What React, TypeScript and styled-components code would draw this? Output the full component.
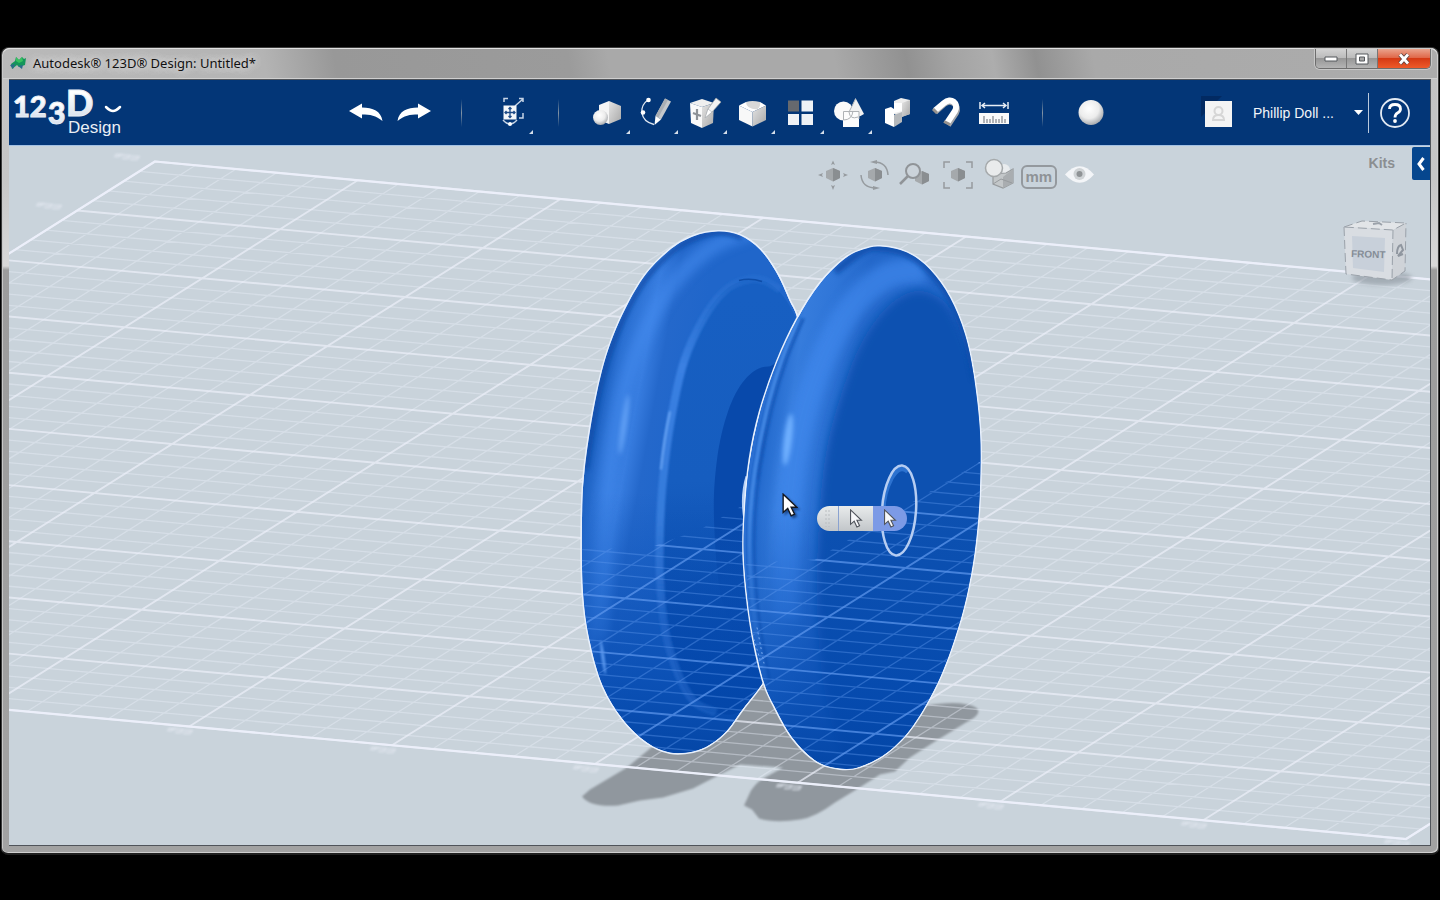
import React from "react";
import styled, { createGlobalStyle } from "styled-components";

type Pt = [number, number];

const GlobalStyle = createGlobalStyle`
  * { box-sizing: border-box; }
  body { margin: 0; background: #000; font-family: "Liberation Sans", Arial, sans-serif; }
  button { border: 0; padding: 0; margin: 0; background: none; font: inherit; color: inherit; cursor: pointer; }
`;

const Desktop = styled.div`
  display: flex;
  flex-direction: column;
  min-height: 100vh;
  padding: 47px 1px 45px;
  background: #000;
`;

const AppWindow = styled.main`
  flex: 1;
  display: flex;
  flex-direction: column;
  padding: 0 7px 7px;
  border: 1px solid #3c3c3c;
  border-bottom: 2px solid #1e1e1e;
  border-radius: 8px 8px 7px 7px;
  background: linear-gradient(#c2c2c2 0, #c6c6c6 130px, #d8d8d8 218px, #9c9c9c 222px, #a2a2a2 100%);
  box-shadow: inset 0 1px 0 #e4e4e4, inset 1px 0 0 #c9c9c9, inset -1px -1px 0 #cfcfcf;
`;

const TitleBar = styled.header`
  display: flex;
  align-items: flex-start;
  height: 31px;
  margin: 0 -6px;
  padding: 0 6px;
  border-radius: 7px 7px 0 0;
  border-top: 1px solid #e0e0e0;
  background: linear-gradient(80deg, #b9b9b9 0, #b4b4b4 260px, #989898 330px, #9b9b9b 560px, #a9a9a9 600px, #a9a9a9 58%, #919191 63%, #a3a3a3 66%, #adadad 69%, #919191 72%, #a9a9a9 76%, #acacac 100%);
  box-shadow: inset 0 -1px 0 #cfcfcf;
`;

const WindowTitle = styled.h1`
  display: flex;
  align-items: center;
  gap: 6px;
  flex: 1;
  margin: 0;
  padding-left: 1px;
  height: 28px;
  font: 400 13px/18px "Noto Sans", "Open Sans", sans-serif;
  color: #111;
  text-shadow: 0 0 8px #e6e6e6, 0 0 8px #e6e6e6;
`;

const WindowControls = styled.div`
  display: flex;
  height: 20px;
  border: 1px solid #6d6d6d;
  border-top: 0;
  border-radius: 0 0 5px 5px;
  overflow: hidden;
  box-shadow: 0 0 0 1px #c8c8c8;
`;

const WindowButton = styled.button<{ $close?: boolean }>`
  display: grid;
  place-items: center;
  width: ${(p) => (p.$close ? 52 : 31)}px;
  border-right: ${(p) => (p.$close ? "0" : "1px solid #777")};
  background: ${(p) =>
    p.$close
      ? "linear-gradient(#eaa38c 0, #e0694a 45%, #d53a14 50%, #ee5a2a 100%)"
      : "linear-gradient(#d2d2d2 0, #bcbcbc 45%, #979797 50%, #b4b4b4 100%)"};
`;

const Client = styled.div`
  flex: 1;
  display: flex;
  flex-direction: column;
  border: 1px solid #50545a;
  border-width: 1px 1px 1px 0;
  min-height: 0;
`;

const Toolbar = styled.nav`
  display: grid;
  grid-template-columns: 1fr auto 1fr;
  align-items: center;
  height: 66px;
  background: #033677;
  border-bottom: 1px solid #a3c1e4;
`;

const BrandButton = styled.button`
  display: block;
  justify-self: start;
  width: 130px;
  height: 64px;
`;

const Tools = styled.div`
  display: flex;
  align-items: center;
  height: 65px;
  padding-left: 18px;
`;

const ToolGroup = styled.div<{ $width: number; $count: number }>`
  display: grid;
  grid-template-columns: repeat(${(p) => p.$count}, 1fr);
  width: ${(p) => p.$width}px;
`;

const ToolButton = styled.button<{ $menu?: boolean }>`
  position: relative;
  display: grid;
  place-items: center;
  height: 64px;
  &::after {
    content: "";
    display: ${(p) => (p.$menu ? "block" : "none")};
    position: absolute;
    right: 1px;
    bottom: 11px;
    border-left: 4px solid transparent;
    border-bottom: 4px solid #d5deea;
  }
`;

const Divider = styled.span`
  width: 1px;
  height: 28px;
  background: linear-gradient(transparent, #8394a5, transparent);
`;

const Account = styled.div`
  display: flex;
  align-items: center;
  justify-self: end;
  height: 64px;
  padding-right: 19px;
`;

const AccountButton = styled.button`
  display: flex;
  align-items: center;
  gap: 20px;
  height: 40px;
  padding-right: 5px;
  border-right: 1px solid #b9c9dd;
  font-size: 14px;
  line-height: 20px;
  color: #f2f5fa;
`;

const UserName = styled.span`
  width: 81px;
  text-align: left;
  white-space: nowrap;
`;

const HelpButton = styled.button`
  display: grid;
  place-items: center;
  width: 32px;
  height: 32px;
  margin-left: 10px;
`;

const Viewport = styled.section`
  position: relative;
  flex: 1;
  min-height: 560px;
  background: #c9d3db;
  overflow: hidden;
`;

const SceneSvg = styled.svg`
  position: absolute;
  inset: 0;
  width: 100%;
  height: 100%;
`;

const Overlay = styled.div`
  position: relative;
  display: flex;
  justify-content: flex-end;
  align-items: flex-start;
`;

const ViewControls = styled.div`
  display: grid;
  grid-template-columns: repeat(7, 1fr);
  width: 288px;
  margin-top: 9px;
  margin-right: 268px;
`;

const ViewButton = styled.button`
  display: grid;
  place-items: center;
  height: 40px;
`;

const UnitButton = styled.button`
  justify-self: center;
  width: 36px;
  height: 24px;
  margin-top: 10px;
  border: 2px solid #94999e;
  border-radius: 6px;
  font-weight: 700;
  font-size: 15px;
  line-height: 20px;
  color: #8e9296;
`;

const KitsLabel = styled.span`
  padding-top: 8px;
  font-weight: 700;
  font-size: 14px;
  line-height: 18px;
  color: #8b8e91;
`;

const KitsTab = styled.button`
  display: grid;
  place-items: center;
  width: 18px;
  height: 33px;
  margin: 1px 0 0 17px;
  border-radius: 2px 0 0 2px;
  background: #05468e;
`;

const CubeButton = styled.button`
  position: absolute;
  top: 68px;
  right: 14px;
  width: 80px;
  height: 76px;
`;

const MiniBar = styled.div`
  position: absolute;
  left: calc(50% + 97px);
  top: calc(50% + 10px);
  display: flex;
  height: 25px;
  border-radius: 13px;
  overflow: hidden;
`;

const MiniButton = styled.button<{ $kind: "grip" | "plain" | "active" }>`
  display: grid;
  place-items: center;
  width: ${(p) => (p.$kind === "grip" ? 22 : 34)}px;
  border-right: ${(p) => (p.$kind === "grip" ? "1px solid #8aa2d0" : "0")};
  background: ${(p) =>
    p.$kind === "active" ? "#7c9ae6" : "linear-gradient(#e8ebec, #c2c6c9)"};
`;

/* Catmull-Rom spline through a list of points */
function curve(points: Pt[], closed = false): string {
  const n = points.length;
  const at = (i: number): Pt =>
    closed ? points[(i + n) % n] : points[Math.max(0, Math.min(n - 1, i))];
  let d = `M${points[0][0]} ${points[0][1]}`;
  for (let i = 0; i < (closed ? n : n - 1); i++) {
    const [a, b, c, e] = [at(i - 1), at(i), at(i + 1), at(i + 2)];
    d += `C${b[0] + (c[0] - a[0]) / 6} ${b[1] + (c[1] - a[1]) / 6} ${c[0] - (e[0] - b[0]) / 6} ${c[1] - (e[1] - b[1]) / 6} ${c[0]} ${c[1]}`;
  }
  return closed ? d + "Z" : d;
}

const gridPoint = (u: number, v: number): string =>
  `${155 + u * 202.8 - v * 77.7} ${162 + u * 18.75 + v * 49}`;

function gridPath(major: boolean): string {
  let d = "";
  for (let i = 0; i <= 50; i++) {
    if ((i % 5 === 0) !== major) continue;
    const t = i / 5;
    d += `M${gridPoint(t, 0)}L${gridPoint(t, 10)}M${gridPoint(0, t)}L${gridPoint(10, t)}`;
  }
  return d;
}

const GRID_MINOR = gridPath(false);
const GRID_MAJOR = gridPath(true);
const GRID_EDGE = `M${gridPoint(0, 0)}L${gridPoint(10, 0)}L${gridPoint(10, 10)}L${gridPoint(0, 10)}Z`;

const LEFT_DISC = curve(
  [[582, 520], [585, 467], [597, 393], [613, 337], [640, 283], [668, 252], [693, 237], [718, 232], [740, 236], [760, 250], [777, 274], [789, 300], [799, 325], [812, 400], [812, 560], [790, 640], [763, 683], [743, 709], [727, 731], [710, 745], [693, 752], [670, 753], [647, 743], [623, 720], [603, 687], [590, 643], [583, 593]],
  true
);
const RIGHT_DISC = curve(
  [[880, 247], [907, 253], [930, 270], [950, 298], [965, 335], [974, 378], [980, 433], [980, 487], [977, 532], [971, 575], [960, 622], [940, 678], [913, 726], [887, 753], [860, 767], [840, 769], [817, 762], [793, 739], [775, 708], [763, 680], [751, 625], [744, 560], [745, 510], [750, 460], [760, 413], [777, 363], [797, 320], [820, 284], [845, 259], [863, 250]],
  true
);
const RIGHT_FACE = curve(
  [[826, 453], [840, 398], [862, 342], [892, 303], [925, 292], [958, 322], [995, 430], [995, 540], [975, 640], [930, 720], [880, 770], [850, 772], [826, 700], [817, 610], [819, 520]],
  true
);
const LEFT_INNER = curve(
  [[660, 520], [664, 450], [677, 385], [702, 322], [726, 290], [752, 280], [775, 288], [797, 320], [830, 400], [800, 640], [745, 708], [716, 713], [696, 704], [678, 675], [665, 622], [660, 570]],
  true
);
const LEFT_CORE = curve(
  [[714, 520], [717, 460], [728, 412], [745, 380], [768, 367], [800, 380], [800, 620], [745, 640], [722, 600]],
  true
);
const RIDGE = curve([[780, 290], [764, 281], [748, 280], [726, 290], [704, 318], [684, 362], [671, 420], [663, 480], [660, 530], [660, 580], [665, 630], [677, 672], [694, 702], [716, 713]]);
const RIM = curve([[799, 319], [782, 360], [767, 410], [755, 470], [750, 520], [750, 570], [755, 625], [765, 682]]);
const SHADOW =
  "M582 797L590 790 627 768 655 745 700 700 760 670 790 690 860 700 925 706Q962 700 976 708 984 714 966 723L935 742 910 758 895 772 880 775 858 789 835 803Q815 818 800 820 775 824 759 819L752 810 744 806 751 791Q757 782 765 778L783 768 740 765 720 775 693 789 663 798 640 801 618 806Q590 808 582 797Z";

function Scene() {
  const labels: Pt[] = [[180, 731], [383, 750], [586, 769], [789, 787], [991, 806], [1194, 825], [1397, 843], [127, 157], [49, 206]];
  return (
    <SceneSvg viewBox="9 146 1421 700" preserveAspectRatio="xMidYMid slice" role="img" aria-label="Yo-yo model on the work plane">
      <defs>
        <linearGradient id="leftBody" gradientUnits="userSpaceOnUse" x1="581" y1="500" x2="668" y2="516">
          <stop offset="0" stopColor="#1c60c0" />
          <stop offset=".14" stopColor="#2b70d2" />
          <stop offset=".42" stopColor="#387de0" />
          <stop offset=".62" stopColor="#2468cb" />
          <stop offset="1" stopColor="#2066ca" />
        </linearGradient>
        <linearGradient id="rightBody" gradientUnits="userSpaceOnUse" x1="752" y1="500" x2="835" y2="512">
          <stop offset="0" stopColor="#1f66ca" />
          <stop offset=".3" stopColor="#367cdc" />
          <stop offset=".6" stopColor="#3076d8" />
          <stop offset="1" stopColor="#2468ca" />
        </linearGradient>
        <linearGradient id="inner" gradientUnits="userSpaceOnUse" x1="700" y1="300" x2="720" y2="700">
          <stop offset="0" stopColor="#175fc2" />
          <stop offset=".45" stopColor="#165dbf" />
          <stop offset="1" stopColor="#0646a8" />
        </linearGradient>
        <linearGradient id="core" gradientUnits="userSpaceOnUse" x1="740" y1="370" x2="740" y2="630">
          <stop offset="0" stopColor="#0849ab" />
          <stop offset=".6" stopColor="#0849ab" />
          <stop offset="1" stopColor="#0849ab" stopOpacity="0" />
        </linearGradient>
        <linearGradient id="lower" x1="0" y1="0" x2="0" y2="1">
          <stop offset=".5" stopColor="#0348ad" stopOpacity="0" />
          <stop offset=".86" stopColor="#0348ad" stopOpacity=".72" />
          <stop offset="1" stopColor="#0345a5" stopOpacity=".95" />
        </linearGradient>
        <linearGradient id="ridge" x1="0" y1="0" x2="0" y2="1">
          <stop offset="0" stopColor="#3078d8" stopOpacity=".3" />
          <stop offset=".2" stopColor="#3a80e2" />
          <stop offset=".55" stopColor="#357bdb" />
          <stop offset=".8" stopColor="#1f63c6" stopOpacity=".8" />
          <stop offset="1" stopColor="#2b6fd0" stopOpacity=".4" />
        </linearGradient>
        <clipPath id="clipLeft"><path d={LEFT_DISC} /></clipPath>
        <clipPath id="clipRight"><path d={RIGHT_DISC} /></clipPath>
        <clipPath id="sunkLeft"><path d="M570 550L650 548 700 530 746 504H780V760H570Z" /></clipPath>
        <clipPath id="sunkRight"><path d="M740 564L815 560 900 510 990 456V780H740Z" /></clipPath>
        <filter id="soft2" x="-50%" y="-50%" width="200%" height="200%"><feGaussianBlur stdDeviation="2" /></filter>
        <filter id="soft5" x="-50%" y="-50%" width="200%" height="200%"><feGaussianBlur stdDeviation="5" /></filter>
        <filter id="soft1" x="-50%" y="-50%" width="200%" height="200%"><feGaussianBlur stdDeviation=".8" /></filter>
      </defs>

      <path d={SHADOW} fill="#90979e" filter="url(#soft1)" />
      <g fill="none" stroke="#eceffa">
        <path d={GRID_MINOR} strokeWidth="1.3" opacity=".4" />
        <path d={GRID_MAJOR} strokeWidth="1.9" opacity=".7" />
        <path d={GRID_EDGE} strokeWidth="2.2" />
      </g>
      <g fill="none" stroke="#e3e8f1" strokeWidth="1.6" opacity=".8" filter="url(#soft1)">
        {labels.map(([x, y]) => (
          <path key={`${x}-${y}`} d={`M${x - 12} ${y - 2}h7l-3 2h-5 M${x - 4} ${y - 1}h7l-2 3h-6 M${x + 4} ${y}h8l-2 3h-7`} />
        ))}
      </g>

      <path d={LEFT_DISC} fill="none" stroke="#e8f0fc" strokeWidth="3" />
      <g clipPath="url(#clipLeft)">
        <path d={LEFT_DISC} fill="url(#leftBody)" />
        <path d={curve([[600, 640], [604, 540], [610, 470], [624, 390], [648, 325], [678, 278], [715, 246], [770, 225]])} fill="none" stroke="#448bee" strokeWidth="16" opacity=".6" filter="url(#soft5)" />
        <path d={curve([[586, 470], [599, 393], [616, 337], [642, 285], [670, 254], [695, 239], [720, 233], [742, 238]])} fill="none" stroke="#0d4aa4" strokeWidth="5" opacity=".8" filter="url(#soft2)" />
        <path d={LEFT_INNER} fill="url(#inner)" />
        <path d={LEFT_CORE} fill="url(#core)" />
        <path d={LEFT_DISC} fill="url(#lower)" />
        <path d={RIDGE} fill="none" stroke="url(#ridge)" strokeWidth="8" filter="url(#soft1)" />
        <path d="M661 470Q664 440 670 412" fill="none" stroke="#6ba6f5" strokeWidth="2" filter="url(#soft1)" />
        <path d="M739 281Q750 278 762 282" fill="none" stroke="#0e4da8" strokeWidth="1.5" />
        <ellipse cx="624" cy="425" rx="3" ry="30" transform="rotate(8 624 425)" fill="#5f9ff5" filter="url(#soft2)" />
        <ellipse cx="603" cy="658" rx="1.5" ry="17" transform="rotate(-8 603 658)" fill="#5d9bf2" filter="url(#soft1)" />
        <g clipPath="url(#sunkLeft)" fill="none" stroke="#5f99ee">
          <path d={GRID_MINOR} strokeWidth="1.3" opacity=".4" />
          <path d={GRID_MAJOR} strokeWidth="1.9" opacity=".7" />
        </g>
        <path d="M747 477Q741 497 745 520" fill="none" stroke="#b9d1f5" strokeWidth="3" />
      </g>

      <path d={RIGHT_DISC} fill="none" stroke="#e8f0fc" strokeWidth="3" clipPath="url(#outsideLeft)" />
      <g clipPath="url(#clipRight)">
        <path d={RIGHT_DISC} fill="url(#rightBody)" />
        <path d={curve([[785, 620], [788, 520], [795, 455], [808, 400], [828, 348], [855, 303], [888, 276], [925, 270]])} fill="none" stroke="#438aef" strokeWidth="26" opacity=".65" filter="url(#soft5)" />
        <path d={RIGHT_FACE} fill="#0a51b1" filter="url(#soft5)" />
        <path d={curve([[835, 272], [863, 251], [880, 248], [907, 254], [930, 271], [950, 298], [966, 337], [976, 380]])} fill="none" stroke="#0d4ca8" strokeWidth="8" opacity=".75" filter="url(#soft2)" />
        <path d={curve([[757, 480], [769, 410], [784, 360], [801, 319]])} fill="none" stroke="#1a5cbd" strokeWidth="3" filter="url(#soft1)" />
        <path d={RIM} fill="none" stroke="#4085e2" strokeWidth="4" filter="url(#soft1)" />
        <path d={RIM} transform="translate(5 0)" fill="none" stroke="#1755b4" strokeWidth="2" opacity=".8" filter="url(#soft1)" />
        <path d={RIGHT_DISC} fill="url(#lower)" />
        <ellipse cx="788" cy="440" rx="4" ry="26" transform="rotate(7 788 440)" fill="#6fb0ff" filter="url(#soft2)" />
        <path d="M751 630L760 660M757 628L764 664" fill="none" stroke="#78a9ef" strokeWidth="1" strokeDasharray="2 3" />
        <g clipPath="url(#sunkRight)" fill="none" stroke="#5f99ee">
          <path d={GRID_MINOR} strokeWidth="1.3" opacity=".4" />
          <path d={GRID_MAJOR} strokeWidth="1.9" opacity=".7" />
        </g>
        <path d={RIM} transform="translate(-5 0)" fill="none" stroke="#2a6fd2" strokeWidth="3" />
      </g>
      <path d="M884 526Q880 500 891 479 900 464 908 472" fill="none" stroke="#3a80dd" strokeWidth="5" opacity=".7" />
      <ellipse cx="899" cy="511" rx="17" ry="45" transform="rotate(4 899 511)" fill="none" stroke="#b6cdf2" strokeWidth="2.5" />
    </SceneSvg>
  );
}

const Pointer = styled.svg`
  position: absolute;
  left: calc(50% + 62px);
  top: calc(50% - 3px);
  filter: drop-shadow(2px 2px 1px rgba(0, 20, 60, 0.5));
`;

const ARROW = "M1 1V17L5 13.500 8 20 11 18.500 8 12.500H13Z";

const ArrowIcon = () => (
  <svg width="14" height="19" viewBox="0 0 14 21" aria-hidden="true">
    <path d={ARROW} fill="#f7f8fa" stroke="#50545c" strokeWidth="1.200" />
  </svg>
);

const Icon = ({ children, size = 36 }: { children: React.ReactNode; size?: number }) => (
  <svg width={size} height={size} viewBox="0 0 36 36" aria-hidden="true">{children}</svg>
);

const SharedDefs = styled.svg`
  position: absolute;
`;

const ToolDefs = () => (
  <SharedDefs width="0" height="0" aria-hidden="true">
    <defs>
      <radialGradient id="ball" cx=".42" cy=".35" r=".65">
        <stop offset="0" stopColor="#fff" />
        <stop offset=".6" stopColor="#ececec" />
        <stop offset="1" stopColor="#a9acb0" />
      </radialGradient>
      <linearGradient id="side" x1="0" y1="0" x2="1" y2="1">
        <stop offset="0" stopColor="#e4e4e4" />
        <stop offset="1" stopColor="#a8a8a8" />
      </linearGradient>
      <linearGradient id="logoFill" x1="0" y1="0" x2="0" y2="1">
        <stop offset=".3" stopColor="#fff" />
        <stop offset="1" stopColor="#cfd9e8" />
      </linearGradient>
    </defs>
  </SharedDefs>
);

const UndoShape = () => (
  <path d="M1 16L14 8.500V12.500C25 12.500 33 16 34.500 26 28 20.500 22 19.500 14 19.500V23.500Z" fill="#fff" />
);

const shapes = {
  undo: <Icon><UndoShape /></Icon>,
  redo: <Icon><g transform="matrix(-1 0 0 1 36 0)"><UndoShape /></g></Icon>,
  transform: (
    <Icon>
      <g transform="translate(3 -1)">
        <g fill="none" stroke="#c6d4e6" strokeWidth="1.500">
          <path d="M9 8V4.500H13M24 4.500H28V8M28 19V24H24M20 12L28 5" />
          <path d="M8 26Q15 34 22 26" />
        </g>
        <circle cx="15" cy="30" r="2" fill="#fff" />
        <path d="M8.500 11.500H21.500V25.500H8.500Z" fill="#f4f7fa" />
        <path d="M15 13.500V23.500M10 18.500H20M13.500 15L15 13.500 16.500 15M13.500 22L15 23.500 16.500 22M11.500 17L10 18.500 11.500 20M18.500 17L20 18.500 18.500 20" fill="none" stroke="#1d4a86" strokeWidth="1.300" />
      </g>
    </Icon>
  ),
  primitives: (
    <Icon>
      <path d="M10 10L20 6V29L10 25Z" fill="#f5f5f5" />
      <path d="M20 6L32 11V24L20 29Z" fill="url(#side)" />
      <circle cx="11.500" cy="22.500" r="7.500" fill="url(#ball)" />
    </Icon>
  ),
  sketch: (
    <Icon>
      <path d="M11 5C2 11 2 26 17 29.500" fill="none" stroke="#dfe7f1" strokeWidth="1.300" />
      <circle cx="11.500" cy="5" r="2.300" fill="#fff" />
      <circle cx="6" cy="17.500" r="2.300" fill="#fff" />
      <path d="M28 3.500L34 6.500 24 24.500 18.500 21Z" fill="#c4c8cc" />
      <path d="M28 3.500L31 5 21 23 18.500 21Z" fill="#a9aeb4" />
      <path d="M18.500 21L24 24.500 17.500 30Z" fill="#fff" />
    </Icon>
  ),
  construct: (
    <Icon>
      <path d="M4 8L16 4 28 8 16 12Z" fill="#efefef" />
      <path d="M4 8L16 12V33L5 28Z" fill="#fafafa" />
      <path d="M16 12L28 8 27 28 16 33Z" fill="url(#side)" />
      <path d="M11 14V25M7 18L15 21" stroke="#8e9297" strokeWidth="2.200" />
      <path d="M30 3L35 7 26 17 20 22 22 14Z" fill="#f1f2f3" stroke="#9a9fa5" strokeWidth=".7" />
      <path d="M22 14L26 17 19 23Z" fill="#fff" stroke="#9a9fa5" strokeWidth=".5" />
    </Icon>
  ),
  modify: (
    <Icon>
      <path d="M5 10.500L12 7 26 7 32 10.500 18.500 17Z" fill="#fff" />
      <path d="M12 7Q12 14 23 14.500 27 12 26 7 18 5 12 7Z" fill="#d8d8d8" />
      <path d="M5 10.500L18.500 17V31.500L5 25Z" fill="#f8f8f8" />
      <path d="M18.500 17L32 10.500V25L18.500 31.500Z" fill="url(#side)" />
    </Icon>
  ),
  pattern: (
    <Icon>
      <path d="M6 5.500H17V16.500H6Z" fill="#66696e" />
      <path d="M19.500 5.500H31V16.500H19.500ZM6 19H17V30H6ZM19.500 19H31V30H19.500Z" fill="#eff2f6" />
    </Icon>
  ),
  group: (
    <Icon>
      <circle cx="12.500" cy="16" r="9.500" fill="#fafafa" />
      <path d="M24.500 3L33 19Q25 25 17.500 19Z" fill="#f1f1f1" />
      <path d="M12 16H28V32H12Z" fill="#fcfcfc" />
      <path d="M12.500 16.500H28V24M12.500 16.500V25Q21 25 22 16M24.500 4L18 17Q19 25 27 22" fill="none" stroke="#afb2b5" strokeWidth="1" />
    </Icon>
  ),
  combine: (
    <Icon>
      <path d="M15 6L22 3 31 5V19L22 22 15 19Z" fill="#ededed" />
      <path d="M23 8L31 5V19L23 22Z" fill="url(#side)" />
      <path d="M6 14L12 12 15 14 15 8 23 8V16L15 18V32L6 28Z" fill="#fff" />
      <path d="M15 20L23 17V27L15 32Z" fill="#b5b8bb" />
    </Icon>
  ),
  snap: (
    <Icon>
      <path d="M7 17L16 9C23 3 32 10 28 18L20 30" fill="none" stroke="#a2a5a9" strokeWidth="6" />
      <path d="M7 15.500L16 8C23 2 31 8 27 16L19 28" fill="none" stroke="#fff" strokeWidth="6" />
      <path d="M5 14L9 18M16 26.500L22 29.500" stroke="#97928e" strokeWidth="3" />
    </Icon>
  ),
  measure: (
    <Icon>
      <path d="M4 7V14M32 7V14M6 10.500H30M9 8L6 10.500 9 13M27 8L30 10.500 27 13" fill="none" stroke="#e8eef6" strokeWidth="1.500" />
      <path d="M3 18H33V29H3Z" fill="#fafafa" />
      <path d="M8 28V21M11 28V24M14 28V24M17 28V21M20 28V24M23 28V24M26 28V21M29 28V24" stroke="#8b8f95" strokeWidth="1.300" />
    </Icon>
  ),
  material: <Icon><circle cx="18" cy="17.500" r="12.500" fill="url(#ball)" /></Icon>,
};

const MiniCube = ({ x = 0, y = 0 }: { x?: number; y?: number }) => (
  <g transform={`translate(${x} ${y})`}>
    <path d="M11 14L18 11 25 14V21L18 24.500 11 21Z" fill="#a5a9ac" />
    <path d="M18 11L25 14V21L18 24.500Z" fill="#8a8e91" />
  </g>
);

const viewShapes = {
  Pan: (
    <Icon>
      <MiniCube />
      <path d="M16 8L18 3.500 20 8 18 7ZM16 28L18 33 20 28 18 29ZM8 16L3 18 8 20 7 18ZM28 16L33 18 28 20 29 18Z" fill="#969b9f" />
    </Icon>
  ),
  Orbit: (
    <Icon>
      <MiniCube x={1} />
      <path d="M18 5Q31 5 32 18M5 18Q6 31 20 31" fill="none" stroke="#969b9f" strokeWidth="1.500" />
      <path d="M21 3L14 5 21 7ZM17 29L24 31 17 33Z" fill="#969b9f" />
    </Icon>
  ),
  Zoom: (
    <Icon>
      <MiniCube x={7} y={3} />
      <circle cx="16" cy="14" r="7" fill="#cbd3da" stroke="#909498" strokeWidth="2" />
      <path d="M11 19L3 27" stroke="#909498" strokeWidth="2.500" />
    </Icon>
  ),
  Fit: (
    <Icon>
      <MiniCube x={1} />
      <path d="M5 11V5H11M27 5H33V11M33 25V31H27M11 31H5V25" fill="none" stroke="#969b9f" strokeWidth="1.500" />
    </Icon>
  ),
  "Display style": (
    <Icon>
      <g transform="translate(1 -1)">
        <circle cx="23" cy="14" r="6" fill="#e9ecee" />
        <path d="M12 18L25 17 32 13V27L22 32 12 28Z" fill="#c3c7c9" stroke="#979b9e" strokeWidth="1.200" />
        <path d="M22 21L32 13V27L22 32Z" fill="#a9adb0" />
        <path d="M12 28L20 23 31 27" fill="none" stroke="#979b9e" />
        <circle cx="13" cy="12" r="8.500" fill="#e9ebec" stroke="#a5a9ab" strokeWidth="1.500" />
      </g>
    </Icon>
  ),
};

const EyeIcon = () => (
  <Icon>
    <path d="M3 17.500Q18 1 32 17.500 18 34 3 17.500Z" fill="#f3f5f8" />
    <circle cx="17.500" cy="17" r="6" fill="#cfd3d6" />
    <circle cx="17.500" cy="17" r="3" fill="#8f9396" />
  </Icon>
);

export default function App() {
  const creation: [string, React.ReactNode, boolean][] = [
    ["Primitives", shapes.primitives, true],
    ["Sketch", shapes.sketch, true],
    ["Construct", shapes.construct, true],
    ["Modify", shapes.modify, true],
    ["Pattern", shapes.pattern, true],
    ["Grouping", shapes.group, true],
    ["Combine", shapes.combine, false],
    ["Snap", shapes.snap, false],
    ["Measure", shapes.measure, false],
  ];
  return (
    <>
      <GlobalStyle />
      <ToolDefs />
      <Desktop>
        <AppWindow>
          <TitleBar>
            <WindowTitle>
              <svg width="17" height="14" viewBox="0 0 17 14" aria-hidden="true">
                <path d="M1 8L5 5 6 1 9 4 12 1 14 3 16 2 15 9 9 11 7 9 2 13Z" fill="#15965a" />
                <path d="M6 1L9 4 12 1 13 5 9 7 6 5Z" fill="#36c25e" />
                <path d="M0 9L5 8 3 13ZM8 10L13 9 12 13Z" fill="#2b6b8a" />
              </svg>
              Autodesk® 123D® Design: Untitled*
            </WindowTitle>
            <WindowControls>
              <WindowButton aria-label="Minimize">
                <svg width="14" height="6" viewBox="0 0 14 6"><path d="M1 1H13V5H1Z" fill="#fff" stroke="#55585c" /></svg>
              </WindowButton>
              <WindowButton aria-label="Maximize">
                <svg width="14" height="12" viewBox="0 0 14 12"><path d="M1 1H13V11H1Z" fill="#fff" stroke="#55585c" /><path d="M4.500 4H9.500V8H4.500Z" fill="#a8a8a8" stroke="#55585c" /></svg>
              </WindowButton>
              <WindowButton $close aria-label="Close">
                <svg width="14" height="12" viewBox="0 0 14 12"><path d="M3 1.500L11 10.500M11 1.500L3 10.500" stroke="#5d4340" strokeWidth="4.500" /><path d="M3 1.500L11 10.500M11 1.500L3 10.500" stroke="#fff" strokeWidth="2.800" /></svg>
              </WindowButton>
            </WindowControls>
          </TitleBar>

          <Client>
            <Toolbar aria-label="Main toolbar">
              <BrandButton aria-label="123D Design menu">
                <svg width="130" height="64" viewBox="0 0 130 64">
                  <g fill="url(#logoFill)" stroke="#e9eef6" strokeWidth="1" fontFamily="Lato, sans-serif" fontWeight="900">
                    <text x="4" y="36" fontSize="29">12</text>
                    <text x="39" y="43" fontSize="30">3</text>
                    <text x="57" y="35" fontSize="36">D</text>
                  </g>
                  <text x="59" y="52" fontSize="17" fontFamily="Liberation Sans, sans-serif" fill="#e9eef5">Design</text>
                  <path d="M97 26Q101 30 104 30T111 26" fill="none" stroke="#fff" strokeWidth="2.500" strokeLinecap="round" />
                </svg>
              </BrandButton>
              <Tools>
                <ToolGroup $width={96} $count={2}>
                  <ToolButton aria-label="Undo">{shapes.undo}</ToolButton>
                  <ToolButton aria-label="Redo">{shapes.redo}</ToolButton>
                </ToolGroup>
                <ToolGroup $width={145} $count={3}>
                  <ToolButton as="span"><Divider /></ToolButton>
                  <ToolButton $menu aria-label="Transform">{shapes.transform}</ToolButton>
                  <ToolButton as="span"><Divider /></ToolButton>
                </ToolGroup>
                <ToolGroup $width={436} $count={9}>
                  {creation.map(([name, icon, menu]) => (
                    <ToolButton key={name} $menu={menu} aria-label={name}>{icon}</ToolButton>
                  ))}
                </ToolGroup>
                <ToolGroup $width={97} $count={2}>
                  <ToolButton as="span"><Divider /></ToolButton>
                  <ToolButton aria-label="Material">{shapes.material}</ToolButton>
                </ToolGroup>
              </Tools>
              <Account>
                <AccountButton>
                  <svg width="32" height="34" viewBox="0 0 32 34" aria-hidden="true">
                    <path d="M0 0H21L0 21Z" fill="#022a62" />
                    <path d="M4 5H31V31H4Z" fill="#f4f4f4" />
                    <circle cx="17.500" cy="15" r="4" fill="none" stroke="#d6d6d6" strokeWidth="2" />
                    <path d="M12 24Q12 19 17.500 19T23 24Z" fill="none" stroke="#d6d6d6" strokeWidth="2" />
                  </svg>
                  <UserName>Phillip Doll ...</UserName>
                  <svg width="9" height="6" viewBox="0 0 9 6" aria-hidden="true"><path d="M0 0H9L4.500 5Z" fill="#fff" /></svg>
                </AccountButton>
                <HelpButton aria-label="Help">
                  <svg width="32" height="32" viewBox="0 0 32 32">
                    <circle cx="16" cy="16" r="14" fill="none" stroke="#e3eaf3" strokeWidth="1.800" />
                    <path d="M10.500 12Q10.500 7.500 16 7.500T21.500 12Q21.500 14.500 18.500 16 16 17.500 16 20.500" fill="none" stroke="#fff" strokeWidth="2.800" />
                    <circle cx="16" cy="24" r="1.900" fill="#fff" />
                  </svg>
                </HelpButton>
              </Account>
            </Toolbar>

            <Viewport>
              <Scene />
              <Overlay>
                <ViewControls>
                  {Object.entries(viewShapes).map(([name, icon]) => (
                    <ViewButton key={name} aria-label={name}>{icon}</ViewButton>
                  ))}
                  <UnitButton>mm</UnitButton>
                  <ViewButton aria-label="Visibility"><EyeIcon /></ViewButton>
                </ViewControls>
                <KitsLabel>Kits</KitsLabel>
                <KitsTab aria-label="Open kits panel">
                  <svg width="10" height="16" viewBox="0 0 10 16"><path d="M7.500 2L3 8 7.500 14" fill="none" stroke="#fff" strokeWidth="3" /></svg>
                </KitsTab>
              </Overlay>
              <CubeButton aria-label="View cube, front">
                <svg width="80" height="76" viewBox="0 0 80 76">
                  <ellipse cx="46" cy="64" rx="30" ry="7" fill="#8b949d" opacity=".6" filter="url(#soft2)" />
                  <path d="M8 13L26 7 70 9 57 16Z" fill="#e2e5e8" />
                  <path d="M8 13L57 16 56 66 10 60Z" fill="#d9dde2" />
                  <path d="M16 22L49 24 48 58 17 54Z" fill="#c8d0da" />
                  <path d="M57 16L70 9 69 57 56 66Z" fill="#cfd3d8" />
                  <path d="M8 13L26 7 70 9 57 16ZM8 13L10 60 56 66 69 57 70 9M57 16L56 66" fill="none" stroke="#9ba2aa" strokeWidth="1" strokeDasharray="9 4" />
                  <path d="M61 40Q61 32 65 31L67 36 62 42 67 40" fill="none" stroke="#8f969f" strokeWidth="2" />
                  <path d="M37 10L43 9 46 11" fill="none" stroke="#9ba2aa" strokeWidth="2" />
                  <text x="15" y="43" fontFamily="Liberation Sans Narrow, Liberation Sans, sans-serif" fontSize="10" fontWeight="700" fill="#858d97" transform="rotate(2 15 43)">FRONT</text>
                </svg>
              </CubeButton>
              <Pointer width="16" height="24" viewBox="0 0 14 21" aria-hidden="true">
                <path d={ARROW} fill="#fff" stroke="#14171e" strokeWidth="1.200" />
              </Pointer>
              <MiniBar role="toolbar" aria-label="Selection">
                <MiniButton $kind="grip" aria-label="Move selection bar">
                  <svg width="8" height="19" viewBox="0 0 8 19"><path d="M3 1V18M6 1V18" stroke="#b9bdc0" strokeDasharray="2 2" /></svg>
                </MiniButton>
                <MiniButton $kind="plain" aria-label="Select object"><ArrowIcon /></MiniButton>
                <MiniButton $kind="active" aria-label="Select body"><ArrowIcon /></MiniButton>
              </MiniBar>
            </Viewport>
          </Client>
        </AppWindow>
      </Desktop>
    </>
  );
}
